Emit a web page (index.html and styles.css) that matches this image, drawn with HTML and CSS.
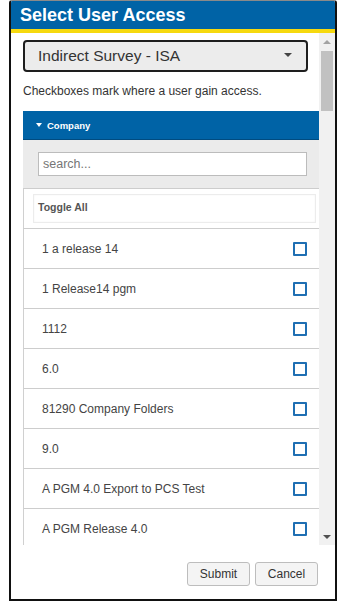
FILE: index.html
```html
<!DOCTYPE html>
<html>
<head>
    <link rel="stylesheet" href="styles.css">
</head>
<body>
    <div class="dialog">
        <div class="dialog-title">Select User Access</div>
        <div class="dialog-main">
            <div class="dialog-body">
                <div class="select-box">
                    <span>Indirect Survey - ISA</span>
                    <span class="select-caret"></span>
                </div>
                <p class="hint">Checkboxes mark where a user gain access.</p>
                <div class="panel">
                    <div class="panel-head"><span class="panel-caret"></span>Company</div>
                    <div class="panel-search">
                        <input type="text" placeholder="search...">
                    </div>
                    <div class="toggle-row">
                        <div class="toggle-all">Toggle All</div>
                    </div>
                    <ul class="item-list">
                        <li><span>1 a release 14</span><span class="check"></span></li>
                        <li><span>1 Release14 pgm</span><span class="check"></span></li>
                        <li><span>1112</span><span class="check"></span></li>
                        <li><span>6.0</span><span class="check"></span></li>
                        <li><span>81290 Company Folders</span><span class="check"></span></li>
                        <li><span>9.0</span><span class="check"></span></li>
                        <li><span>A PGM 4.0 Export to PCS Test</span><span class="check"></span></li>
                        <li><span>A PGM Release 4.0</span><span class="check"></span></li>
                    </ul>
                </div>
            </div>
            <div class="scrollbar">
                <div class="sb-btn"><span class="sb-up"></span></div>
                <div class="sb-thumb"></div>
                <div class="sb-track"></div>
                <div class="sb-btn"><span class="sb-down"></span></div>
            </div>
        </div>
        <div class="dialog-foot">
            <button type="button">Submit</button>
            <button type="button">Cancel</button>
        </div>
    </div>
</body>
</html>
```

FILE: styles.css
```css
body {
    margin: 0;
    padding: 0;
    font-family: "Liberation Sans", Arial, sans-serif;
    background-color: #fff;
}

.dialog {
    margin-left: 9px;
    width: 328px;
    height: 601px;
    box-sizing: border-box;
    border: 2px solid #111;
    border-top: 1px solid #8a8a8a;
    border-radius: 3px 3px 0 0;
    display: flex;
    flex-direction: column;
    overflow: hidden;
}

.dialog-title {
    height: 28px;
    flex-shrink: 0;
    background-color: #0063a6;
    border-bottom: 4px solid #f6d90f;
    color: #fff;
    font-size: 18px;
    font-weight: bold;
    line-height: 29px;
    padding-left: 9px;
}

.dialog-main {
    height: 512px;
    flex-shrink: 0;
    display: flex;
}

.dialog-body {
    flex: 1;
    overflow: hidden;
    padding: 7px 0 0 12px;
}

.select-box {
    height: 32px;
    box-sizing: border-box;
    margin-right: 11px;
    border: 2px solid #1e1e1e;
    border-radius: 4px;
    background-color: #ececec;
    display: flex;
    align-items: center;
    justify-content: space-between;
    padding: 0 14px 0 13px;
    font-size: 15.5px;
    color: #333;
}

.select-caret {
    width: 0;
    height: 0;
    border-left: 4px solid transparent;
    border-right: 4px solid transparent;
    border-top: 4px solid #444;
    margin-top: -2px;
}

.hint {
    margin: 12px 0 13px;
    font-size: 12px;
    line-height: 14px;
    color: #333;
}

.panel-head {
    height: 28px;
    background-color: #0063a6;
    border-bottom: 1px solid #004b80;
    color: #fff;
    font-size: 9.5px;
    font-weight: bold;
    display: flex;
    align-items: center;
    padding-left: 13px;
}

.panel-caret {
    width: 0;
    height: 0;
    border-left: 3.5px solid transparent;
    border-right: 3.5px solid transparent;
    border-top: 4px solid #fff;
    margin-right: 5px;
}

.panel-search {
    background-color: #ebebeb;
    padding: 12px 12px 12px 15px;
    border-bottom: 1px solid #cdcdcd;
}

.panel-search input {
    display: block;
    width: 100%;
    height: 24px;
    box-sizing: border-box;
    border: 1px solid #bcbcbc;
    padding: 0 4px;
    font-family: "Liberation Sans", Arial, sans-serif;
    font-size: 12.5px;
    color: #333;
    background: #fff;
}

.panel-search input::placeholder {
    color: #767676;
}

.toggle-row {
    height: 40px;
    box-sizing: border-box;
    border-left: 1px solid #d0d0d0;
    border-bottom: 1px solid #cdcdcd;
    padding: 5px 3px 0 9px;
}

.toggle-all {
    height: 29px;
    box-sizing: border-box;
    border: 1px solid #ececec;
    box-shadow: inset 0 0 2px rgba(0, 0, 0, 0.06);
    padding-left: 4px;
    line-height: 25px;
    font-size: 10.5px;
    font-weight: bold;
    color: #555;
}

.item-list {
    list-style: none;
    margin: 0;
    padding: 0;
    border-left: 1px solid #d0d0d0;
}

.item-list li {
    height: 40px;
    box-sizing: border-box;
    border-bottom: 1px solid #cdcdcd;
    display: flex;
    align-items: center;
    justify-content: space-between;
    padding: 0 12px 0 18px;
    font-size: 12px;
    color: #444;
}

.check {
    width: 14px;
    height: 14px;
    box-sizing: border-box;
    border: 2px solid #1f6fb3;
    border-radius: 1px;
    background: #fff;
}

.scrollbar {
    width: 16px;
    background-color: #f1f1f1;
    display: flex;
    flex-direction: column;
}

.sb-btn {
    height: 17px;
    display: flex;
    align-items: center;
    justify-content: center;
}

.sb-up {
    width: 0;
    height: 0;
    border-left: 4px solid transparent;
    border-right: 4px solid transparent;
    border-bottom: 4px solid #a3a3a3;
}

.sb-down {
    width: 0;
    height: 0;
    border-left: 4px solid transparent;
    border-right: 4px solid transparent;
    border-top: 4px solid #505050;
}

.sb-thumb {
    height: 60px;
    margin: 1px 2px 0 2px;
    background-color: #c1c1c1;
}

.sb-track {
    flex: 1;
}

.dialog-foot {
    flex: 1;
    display: flex;
    justify-content: flex-end;
    align-items: flex-start;
    gap: 5px;
    padding: 17px 17px 0 0;
}

.dialog-foot button {
    width: 63px;
    height: 24px;
    background-color: #f4f4f4;
    border: 1px solid #bdbdbd;
    border-radius: 3px;
    font-family: "Liberation Sans", Arial, sans-serif;
    font-size: 12px;
    color: #333;
    cursor: pointer;
}
```
